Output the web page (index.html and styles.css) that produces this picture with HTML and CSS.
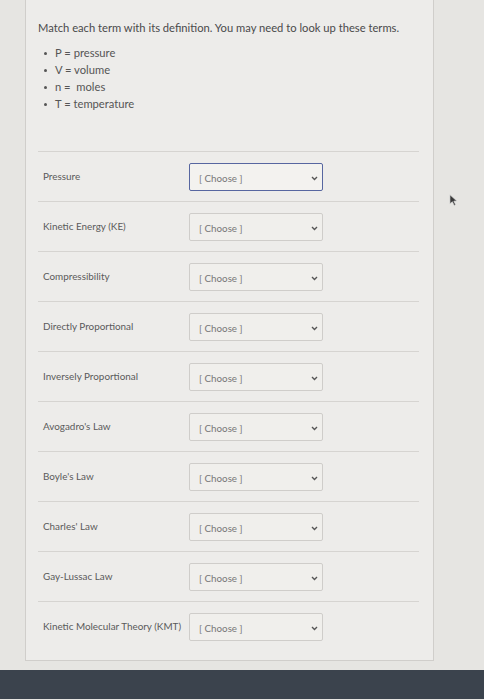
FILE: index.html
```html
<!DOCTYPE html>
<html>
<head>
<meta charset="utf-8">
<link rel="stylesheet" href="styles.css">
</head>
<body>
<div class="page">
  <div class="card">
    <p class="intro">Match each term with its definition. You may need to look up these terms.</p>
    <ul class="vars">
      <li>P = pressure</li>
      <li>V = volume</li>
      <li>n =&nbsp; moles</li>
      <li>T = temperature</li>
    </ul>
    <div class="rows">
      <div class="row"><div class="term">Pressure</div><div class="select focus"><span>[ Choose ]</span><svg class="chev" viewBox="0 0 8 6" width="7" height="5"><path d="M1 1.2 L4 4.3 L7 1.2" fill="none" stroke="#555" stroke-width="1.6"/></svg></div></div>
      <div class="row"><div class="term">Kinetic Energy (KE)</div><div class="select"><span>[ Choose ]</span><svg class="chev" viewBox="0 0 8 6" width="7" height="5"><path d="M1 1.2 L4 4.3 L7 1.2" fill="none" stroke="#555" stroke-width="1.6"/></svg></div></div>
      <div class="row"><div class="term">Compressibility</div><div class="select"><span>[ Choose ]</span><svg class="chev" viewBox="0 0 8 6" width="7" height="5"><path d="M1 1.2 L4 4.3 L7 1.2" fill="none" stroke="#555" stroke-width="1.6"/></svg></div></div>
      <div class="row"><div class="term">Directly Proportional</div><div class="select"><span>[ Choose ]</span><svg class="chev" viewBox="0 0 8 6" width="7" height="5"><path d="M1 1.2 L4 4.3 L7 1.2" fill="none" stroke="#555" stroke-width="1.6"/></svg></div></div>
      <div class="row"><div class="term">Inversely Proportional</div><div class="select"><span>[ Choose ]</span><svg class="chev" viewBox="0 0 8 6" width="7" height="5"><path d="M1 1.2 L4 4.3 L7 1.2" fill="none" stroke="#555" stroke-width="1.6"/></svg></div></div>
      <div class="row"><div class="term">Avogadro's Law</div><div class="select"><span>[ Choose ]</span><svg class="chev" viewBox="0 0 8 6" width="7" height="5"><path d="M1 1.2 L4 4.3 L7 1.2" fill="none" stroke="#555" stroke-width="1.6"/></svg></div></div>
      <div class="row"><div class="term">Boyle's Law</div><div class="select"><span>[ Choose ]</span><svg class="chev" viewBox="0 0 8 6" width="7" height="5"><path d="M1 1.2 L4 4.3 L7 1.2" fill="none" stroke="#555" stroke-width="1.6"/></svg></div></div>
      <div class="row"><div class="term">Charles' Law</div><div class="select"><span>[ Choose ]</span><svg class="chev" viewBox="0 0 8 6" width="7" height="5"><path d="M1 1.2 L4 4.3 L7 1.2" fill="none" stroke="#555" stroke-width="1.6"/></svg></div></div>
      <div class="row"><div class="term">Gay-Lussac Law</div><div class="select"><span>[ Choose ]</span><svg class="chev" viewBox="0 0 8 6" width="7" height="5"><path d="M1 1.2 L4 4.3 L7 1.2" fill="none" stroke="#555" stroke-width="1.6"/></svg></div></div>
      <div class="row"><div class="term">Kinetic Molecular Theory (KMT)</div><div class="select"><span>[ Choose ]</span><svg class="chev" viewBox="0 0 8 6" width="7" height="5"><path d="M1 1.2 L4 4.3 L7 1.2" fill="none" stroke="#555" stroke-width="1.6"/></svg></div></div>
    </div>
  </div>
  <svg class="cursor" viewBox="0 0 12 16" width="10" height="13"><path d="M1 1 L1 12 L4 9.5 L6.2 14 L8 13.2 L5.8 8.8 L9.5 8.6 Z" fill="#3a3a3a" stroke="#ddd" stroke-width="0.8"/></svg>
</div>
<div class="taskbar"></div>
</body>
</html>
```

FILE: styles.css
```css
html, body {
  margin: 0;
  padding: 0;
}
body {
  width: 484px;
  height: 700px;
  overflow: hidden;
  background: #e6e5e2;
  font-family: Lato, "Open Sans", sans-serif;
  color: #4a4a4a;
}
.page {
  position: relative;
  height: 671px;
  padding-left: 25px;
}
.card {
  width: 409px;
  height: 662px;
  box-sizing: border-box;
  margin-top: -1px;
  padding: 0 14px 0 12px;
  background: #edecea;
  border: 1px solid #d0cecb;
  border-top: none;
}
.intro {
  margin: 0;
  padding-top: 21px;
  font-size: 11.2px;
  line-height: 15px;
  color: #4a4a4a;
}
.vars {
  list-style: none;
  margin: 9px 0 0;
  padding: 0 0 0 17px;
}
.vars li {
  position: relative;
  font-size: 11.2px;
  line-height: 17px;
  color: #555;
}
.vars li::before {
  content: "";
  position: absolute;
  left: -11px;
  top: 8px;
  width: 3px;
  height: 3px;
  border-radius: 50%;
  background: #555;
}
.rows {
  margin-top: 39px;
}
.row {
  display: flex;
  height: 50px;
  box-sizing: border-box;
  border-top: 1px solid #d6d4d1;
  padding-left: 5px;
}
.term {
  width: 146px;
  white-space: nowrap;
  font-size: 9.9px;
  line-height: 14px;
  padding-top: 17px;
  color: #5a5a5a;
}
.select {
  margin-top: 11px;
  width: 134px;
  height: 28px;
  box-sizing: border-box;
  border: 1px solid #cfcdca;
  border-radius: 2px;
  background: #f0efec;
  display: flex;
  align-items: center;
  justify-content: space-between;
  padding: 2px 4px 0 9px;
  font-size: 9.8px;
  color: #777;
}
.select.focus {
  border: 1.5px solid #5766a0;
  background: #f3f2ef;
}
.chev {
  display: block;
}
.cursor {
  position: absolute;
  left: 449px;
  top: 195px;
}
.taskbar {
  height: 29px;
  background: #3b434d;
}
```
